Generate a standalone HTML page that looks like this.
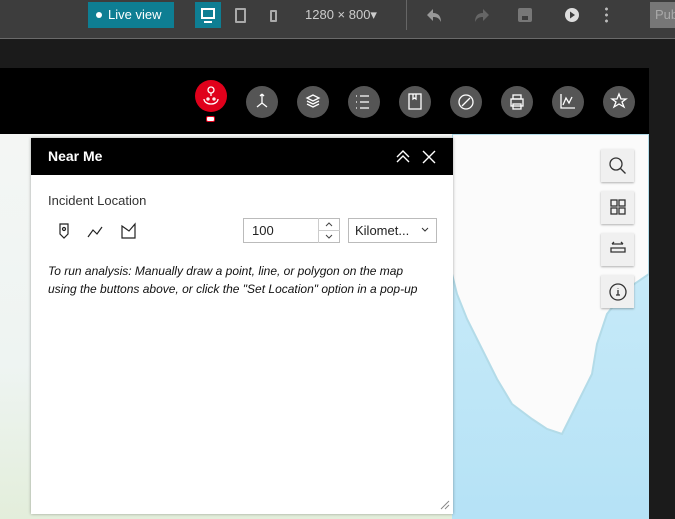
<!DOCTYPE html>
<html><head><style>
*{margin:0;padding:0;box-sizing:border-box}
body{width:675px;height:519px;overflow:hidden;background:#1b1b1b;font-family:"Liberation Sans",sans-serif;position:relative}
.a{position:absolute}
.c{position:absolute;width:32px;height:32px;border-radius:50%;background:#555;top:86px}
.mb{position:absolute;left:601px;width:33px;height:33px;background:#f0f0f0;box-shadow:0 1px 2px rgba(0,0,0,.3)}
</style></head><body>
<div class="a" style="left:0;top:0;width:675px;height:39px;background:#3d3d3d;border-bottom:1px solid #6a6a6a"></div>
<div class="a" style="left:88px;top:2px;width:86px;height:26px;background:#0e7e93;color:#fff;font-size:13px;line-height:26px;padding-left:8px"><span style="display:inline-block;width:6px;height:6px;border-radius:50%;background:#fff;margin-right:6px;vertical-align:1px"></span>Live view</div>
<div class="a" style="left:195px;top:2px;width:26px;height:26px;background:#0e7e93"></div>
<div class="a" style="left:201px;top:8px;width:14px;height:11px;border:2px solid #fff"></div>
<div class="a" style="left:204px;top:21px;width:8px;height:2px;background:#fff"></div>
<div class="a" style="left:235px;top:8px;width:11px;height:15px;border:2px solid #aaa;border-radius:1px"></div>
<div class="a" style="left:270px;top:10px;width:7px;height:12px;border:2px solid #aaa;border-radius:1px"></div>
<div class="a" style="left:305px;top:7px;color:#ccc;font-size:13px">1280 × 800▾</div>
<div class="a" style="left:406px;top:0;width:1px;height:30px;background:#666"></div>
<svg class="a" style="left:420px;top:4px" width="180" height="22">
<path d="M7 11l6-6v4c6 0 8 4 8 9-2-4-4-5-8-5v4z" fill="#999"/>
<path d="M69 11l-6-6v4c-6 0-8 4-8 9 2-4 4-5 8-5v4z" fill="#666"/>
<rect x="98" y="4" width="14" height="14" rx="2" fill="#777"/><rect x="102" y="12" width="6" height="4" fill="#3d3d3d"/>
<circle cx="152" cy="11" r="7" fill="#ddd"/><path d="M150 7.5v7l5-3.5z" fill="#3d3d3d"/>
</svg>
<div class="a" style="left:605px;top:6px;width:3px;height:18px;background:radial-gradient(circle,#bbb 1.3px,transparent 1.6px) 0 0/3px 6px"></div>
<div class="a" style="left:650px;top:2px;width:25px;height:26px;background:#777;color:#aaa;font-size:13px;line-height:26px;padding-left:5px">Pub</div>
<div class="a" style="left:0;top:68px;width:649px;height:66px;background:#000"></div>
<div class="c" style="left:195px;top:80px;width:32px;height:32px;background:#e0001b"></div>
<div class="a" style="left:206px;top:116px;width:9px;height:6px;border:1.5px solid #e0001b;border-radius:2px;background:#fff"></div>
<div class="c" style="left:246px"></div><div class="c" style="left:297px"></div><div class="c" style="left:348px"></div><div class="c" style="left:399px"></div><div class="c" style="left:450px"></div><div class="c" style="left:501px"></div><div class="c" style="left:552px"></div><div class="c" style="left:603px"></div>
<svg class="a" style="left:0;top:80px" width="649" height="40" fill="none" stroke="#fff" stroke-width="1.3">
<circle cx="211" cy="10" r="3"/><path d="M211 13v3M204 19 a7 5 0 0 0 14 0"/><circle cx="208" cy="19" r="1"/><circle cx="214" cy="19" r="1"/>
<path d="M262 14v9l-5 4M262 23l5 4M262 14l-2 2M262 14l2 2"/>
<path d="M313 15l-6 3 6 3 6-3zM307 21l6 3 6-3M307 24l6 3 6-3"/>
<path d="M360 16h9M360 22h9M360 28h9M356 16h1M356 22h1M356 28h1"/>
<rect x="409" y="14" width="12" height="15"/><path d="M413 14v5l1.5-1 1.5 1v-5"/>
<circle cx="466" cy="22" r="7"/><path d="M462 26l8-8"/>
<rect x="511" y="19" width="12" height="7"/><rect x="513" y="15" width="8" height="4"/><rect x="513" y="24" width="8" height="5"/>
<path d="M561 14v14h14M563 25l3-7 3 5 3-6"/>
<path d="M619 14l2 5h5l-4 3 2 5-5-3-5 3 2-5-4-3h5z"/>
</svg>
<div class="a" style="left:0;top:134px;width:649px;height:385px;background:linear-gradient(180deg,#f4f6f4 0%,#eef4f2 60%,#e3eedb 100%)"></div>
<svg class="a" style="left:452px;top:134px" width="197" height="385">
<defs><linearGradient id="g" x1="0" y1="0" x2="0" y2="1"><stop offset="0" stop-color="#d0eef9"/><stop offset="1" stop-color="#b5e2f6"/></linearGradient></defs>
<rect width="197" height="385" fill="url(#g)"/>
<path d="M0 0H197V140L175 155L155 180L145 210L140 240L125 270L110 300L95 295L80 285L60 270L45 245L30 215L15 185L5 160L0 140Z" fill="#fbfbfb" stroke="#b3dbe8" stroke-width="2"/>
</svg>
<div class="mb" style="top:149px"></div><div class="mb" style="top:191px"></div><div class="mb" style="top:233px"></div><div class="mb" style="top:275px"></div>
<svg class="a" style="left:601px;top:149px" width="33" height="160" fill="none" stroke="#333" stroke-width="1.3">
<circle cx="15" cy="15" r="6"/><path d="M19.5 19.5l5 5"/>
<rect x="10" y="51" width="6" height="6"/><rect x="18" y="51" width="6" height="6"/><rect x="10" y="59" width="6" height="6"/><rect x="18" y="59" width="6" height="6"/>
<path d="M11 95h11M11 95l2-2M22 95l-2-2M10 99h14v4H10z"/>
<circle cx="17" cy="143" r="8"/><path d="M17 141v5M15 146h4M17 139v.5"/>
</svg>
<div class="a" style="left:31px;top:138px;width:422px;height:376px;background:#fff;box-shadow:0 0 3px rgba(0,0,0,.35)"></div>
<div class="a" style="left:31px;top:138px;width:422px;height:37px;background:#000;color:#fff;font-weight:bold;font-size:14px;line-height:37px;padding-left:17px">Near Me</div>
<svg class="a" style="left:392px;top:148px" width="50" height="18" fill="none" stroke="#fff" stroke-width="1.4"><path d="M5 9l6-6 6 6M5 14l6-6 6 6M31 3l12 12M43 3L31 15"/></svg>
<div class="a" style="left:48px;top:193px;font-size:13px;color:#333">Incident Location</div>
<svg class="a" style="left:55px;top:221px" width="85" height="20" fill="none" stroke="#222" stroke-width="1.2">
<path d="M5 3h8v10l-4 4-4-4z"/><circle cx="9" cy="8" r="1.5"/>
<path d="M33 16l5-7 4 4 5-7"/>
<path d="M67 5v12h13V3l-6 7z"/>
</svg>
<div class="a" style="left:243px;top:218px;width:97px;height:25px;border:1px solid #bbb;font-size:13px;line-height:23px;padding-left:8px;color:#222">100</div>
<div class="a" style="left:318px;top:218px;width:1px;height:25px;background:#ccc"></div>
<div class="a" style="left:318px;top:230px;width:22px;height:1px;background:#ccc"></div>
<svg class="a" style="left:319px;top:219px" width="20" height="23" fill="none" stroke="#444"><path d="M7 7l3-3 3 3M7 16l3 3 3-3"/></svg>
<div class="a" style="left:348px;top:218px;width:89px;height:25px;border:1px solid #bbb;font-size:13px;line-height:23px;padding-left:6px;color:#222">Kilomet...</div>
<svg class="a" style="left:420px;top:226px" width="10" height="8" fill="none" stroke="#333"><path d="M2 2l3 3 3-3"/></svg>
<div class="a" style="left:48px;top:262px;font-size:12px;font-style:italic;line-height:18px;color:#111;width:372px">To run analysis: Manually draw a point, line, or polygon on the map using the buttons above, or click the "Set Location" option in a pop-up</div>
<svg class="a" style="left:440px;top:500px" width="10" height="10" stroke="#888"><path d="M1 9L9 1M5 9l4-4"/></svg>
</body></html>
